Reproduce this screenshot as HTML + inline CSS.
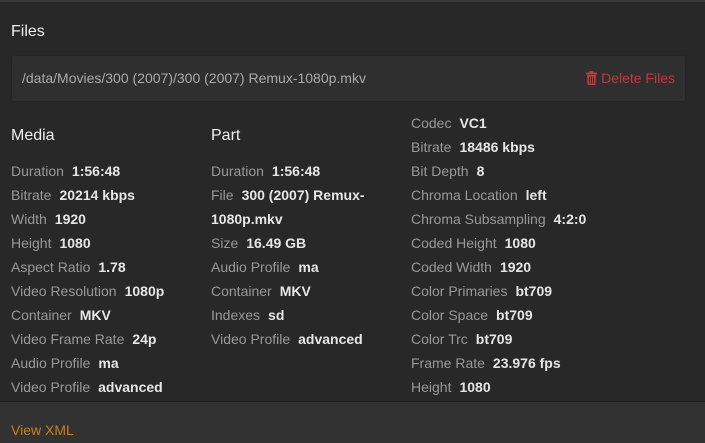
<!DOCTYPE html><html><head><style>
body{margin:0;width:705px;height:442px;background:#282828;font-family:"Liberation Sans",sans-serif;overflow:hidden;position:relative;color:#eee}
.top{position:absolute;top:0;left:0;width:705px;height:2px;background:#3a3a3a}
.h{position:absolute;font-size:16px;color:#eee}
.box{position:absolute;left:11px;top:55px;width:673px;height:45px;background:#2f2f2f;border:1px solid #252525;border-radius:3px}
.col{position:absolute;font-size:14px;line-height:24px}
.col div{white-space:nowrap}
.l{color:#999;margin-right:8px}
.v{color:#e6e6e6;font-weight:bold}
.foot{position:absolute;left:0;top:401px;width:705px;height:41px;background:#323232;border-top:1px solid #1e1e1e}
</style></head><body>
<div class="top"></div>
<div class="h" style="left:11px;top:23px">Files</div>
<div class="box">
<div style="position:absolute;left:10px;top:14px;font-size:14px;color:#aaa">/data/Movies/300 (2007)/300 (2007) Remux-1080p.mkv</div>
<div style="position:absolute;right:10px;top:14px;font-size:14px;color:#c0393b">
<svg width="11" height="14" viewBox="0 0 11 14" style="vertical-align:-2px;margin-right:4px"><rect x="0" y="1.5" width="11" height="2" fill="#c0393b"/><rect x="3.5" y="0" width="4" height="2" fill="#c0393b"/><path d="M1 4h9l-.6 10H1.6z" fill="#c0393b"/><path d="M3.5 5.5v7M5.5 5.5v7M7.5 5.5v7" stroke="#2f2f2f" stroke-width="1"/></svg>Delete Files</div>
</div>
<div class="h" style="left:11px;top:127px">Media</div>
<div class="h" style="left:211px;top:127px">Part</div>
<div class="col" style="left:11px;top:159px">
<div><span class="l">Duration</span><span class="v">1:56:48</span></div>
<div><span class="l">Bitrate</span><span class="v">20214 kbps</span></div>
<div><span class="l">Width</span><span class="v">1920</span></div>
<div><span class="l">Height</span><span class="v">1080</span></div>
<div><span class="l">Aspect Ratio</span><span class="v">1.78</span></div>
<div><span class="l">Video Resolution</span><span class="v">1080p</span></div>
<div><span class="l">Container</span><span class="v">MKV</span></div>
<div><span class="l">Video Frame Rate</span><span class="v">24p</span></div>
<div><span class="l">Audio Profile</span><span class="v">ma</span></div>
<div><span class="l">Video Profile</span><span class="v">advanced</span></div>
</div>
<div class="col" style="left:211px;top:159px">
<div><span class="l">Duration</span><span class="v">1:56:48</span></div>
<div><span class="l">File</span><span class="v">300 (2007) Remux-</span></div>
<div><span class="v">1080p.mkv</span></div>
<div><span class="l">Size</span><span class="v">16.49 GB</span></div>
<div><span class="l">Audio Profile</span><span class="v">ma</span></div>
<div><span class="l">Container</span><span class="v">MKV</span></div>
<div><span class="l">Indexes</span><span class="v">sd</span></div>
<div><span class="l">Video Profile</span><span class="v">advanced</span></div>
</div>
<div class="col" style="left:411px;top:111px">
<div><span class="l">Codec</span><span class="v">VC1</span></div>
<div><span class="l">Bitrate</span><span class="v">18486 kbps</span></div>
<div><span class="l">Bit Depth</span><span class="v">8</span></div>
<div><span class="l">Chroma Location</span><span class="v">left</span></div>
<div><span class="l">Chroma Subsampling</span><span class="v">4:2:0</span></div>
<div><span class="l">Coded Height</span><span class="v">1080</span></div>
<div><span class="l">Coded Width</span><span class="v">1920</span></div>
<div><span class="l">Color Primaries</span><span class="v">bt709</span></div>
<div><span class="l">Color Space</span><span class="v">bt709</span></div>
<div><span class="l">Color Trc</span><span class="v">bt709</span></div>
<div><span class="l">Frame Rate</span><span class="v">23.976 fps</span></div>
<div><span class="l">Height</span><span class="v">1080</span></div>
</div>
<div class="foot"><div style="position:absolute;left:11px;top:20px;font-size:14px;color:#c87f1a">View XML</div></div>
</body></html>
